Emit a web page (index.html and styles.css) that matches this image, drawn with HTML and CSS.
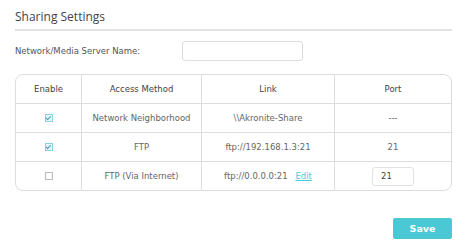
FILE: index.html
```html
<!DOCTYPE html>
<html lang="en">

<head>
    <meta charset="UTF-8">
    <meta
        name="viewport"
        content="width=device-width, initial-scale=1.0"
    >
    <title>Sharing Settings</title>
    <link rel="stylesheet" href="styles.css">
</head>

<body>
    <div class="panel">
        <h2 class="panel-title">Sharing Settings</h2>

        <div class="field">
            <label for="server-name">Network/Media Server Name:</label>
            <input
                type="text"
                id="server-name"
                class="text-input"
            />
        </div>

        <table class="share-table">
            <colgroup>
                <col class="col-enable">
                <col class="col-method">
                <col class="col-link">
                <col class="col-port">
            </colgroup>
            <thead>
                <tr>
                    <th>Enable</th>
                    <th>Access Method</th>
                    <th>Link</th>
                    <th>Port</th>
                </tr>
            </thead>
            <tbody>
                <tr>
                    <td><span class="check checked"></span></td>
                    <td>Network Neighborhood</td>
                    <td>\\Akronite-Share</td>
                    <td>---</td>
                </tr>
                <tr>
                    <td><span class="check checked"></span></td>
                    <td>FTP</td>
                    <td>ftp://192.168.1.3:21</td>
                    <td>21</td>
                </tr>
                <tr>
                    <td><span class="check"></span></td>
                    <td>FTP (Via Internet)</td>
                    <td>ftp://0.0.0.0:21 <a href="#" class="edit-link">Edit</a></td>
                    <td><input type="text" class="port-input" value="21"></td>
                </tr>
            </tbody>
        </table>

        <div class="actions">
            <button class="btn-save">Save</button>
        </div>
    </div>
</body>

</html>
```

FILE: styles.css
```css
body {
    margin: 0;
    background-color: #fff;
    font-family: "DejaVu Sans", Verdana, sans-serif;
    color: #666;
}

.panel {
    width: 437px;
    padding: 9px 0 0 15px;
}

.panel-title {
    margin: 0;
    padding-bottom: 4px;
    border-bottom: 2px solid #e2e2e2;
    font-family: "Open Sans", sans-serif;
    font-size: 12px;
    font-weight: normal;
    color: #444;
    line-height: 16px;
}

.field {
    display: flex;
    align-items: center;
    margin-top: 10px;
    height: 20px;
}

.field label {
    width: 167px;
    font-size: 8.5px;
    color: #555;
}

.text-input {
    box-sizing: border-box;
    width: 121px;
    height: 20px;
    border: 1px solid #ddd;
    border-radius: 3px;
    padding: 0 6px;
}

.share-table {
    width: 437px;
    margin-top: 13px;
    border: 1px solid #ddd;
    border-radius: 8px;
    border-spacing: 0;
    table-layout: fixed;
    font-size: 8.5px;
}

.col-enable {
    width: 66px;
}

.col-method {
    width: 120px;
}

.col-link {
    width: 133px;
}

.share-table th,
.share-table td {
    height: 28px;
    padding: 0;
    text-align: center;
    border-right: 1px solid #ddd;
    border-bottom: 1px solid #ddd;
}

.share-table th {
    font-weight: normal;
    color: #444;
}

.share-table tr> :last-child {
    border-right: 0;
}

.share-table tbody tr:last-child td {
    border-bottom: 0;
}

.check {
    display: inline-block;
    box-sizing: border-box;
    width: 8px;
    height: 8px;
    border: 1px solid #bbb;
    vertical-align: middle;
    position: relative;
    top: -1px;
}

.check.checked {
    border-color: #8ccfe0;
    background-color: #eaf7fa;
}

/* small tick drawn with two borders */
.check.checked::after {
    content: "";
    position: absolute;
    left: 1.5px;
    top: 0;
    width: 2px;
    height: 3.5px;
    border: solid #3a9fb8;
    border-width: 0 1px 1px 0;
    transform: rotate(45deg);
}

.edit-link {
    margin-left: 5px;
    color: #4acbd6;
}

.port-input {
    box-sizing: border-box;
    width: 42px;
    height: 19px;
    border: 1px solid #e2e2e2;
    border-radius: 3px;
    padding: 0 8px;
    font-family: "DejaVu Sans", Verdana, sans-serif;
    font-size: 8.5px;
    color: #444;
}

.actions {
    display: flex;
    justify-content: flex-end;
    margin-top: 27px;
}

.btn-save {
    width: 59px;
    height: 21px;
    border: 0;
    border-radius: 2px;
    background-color: #4ac8d3;
    color: #fff;
    font-family: "DejaVu Sans", Verdana, sans-serif;
    font-size: 9.5px;
    font-weight: bold;
}
```
